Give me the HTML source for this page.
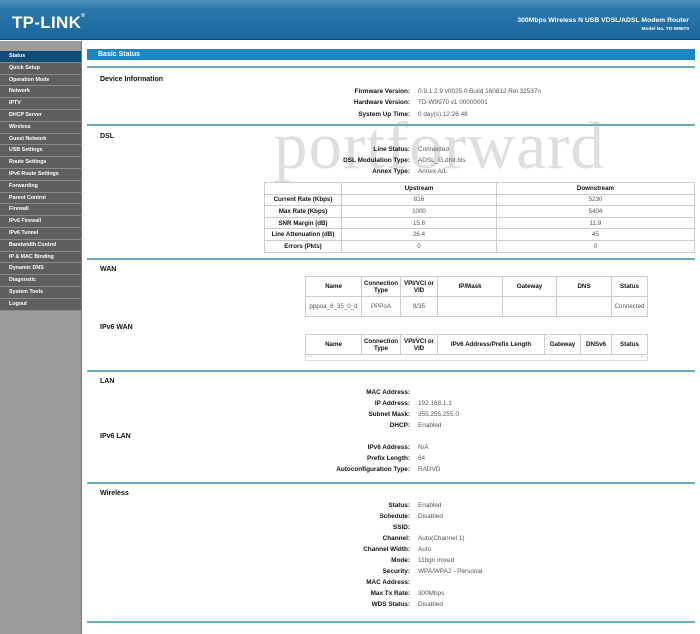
<!DOCTYPE html>
<html><head><meta charset="utf-8"><style>
*{margin:0;padding:0;box-sizing:border-box}
body{width:700px;height:634px;overflow:hidden;background:#fff;font-family:"Liberation Sans",Arial,sans-serif;position:relative;color:#333}
.hdr{position:absolute;left:0;top:0;width:700px;height:40px;background:linear-gradient(180deg,#4f93bd 0%,#2a78aa 25%,#1a66a0 100%);border-bottom:1px solid #0d4f7c}
.logo{position:absolute;left:12px;top:13px;color:#fff;font-weight:bold;font-size:17px;letter-spacing:0.3px;font-family:"Liberation Sans",sans-serif}
.t1{position:absolute;right:11px;top:17px;color:#fff;font-weight:bold;font-size:6.8px}
.t2{position:absolute;right:11px;top:27px;color:#fff;font-weight:bold;font-size:4.8px}
.side{position:absolute;left:0;top:41px;width:82px;height:593px;background:#9c9c9c;border-right:1px solid #777}
.side div{height:11.8px;line-height:11.3px;background:#5f5f5f;border-bottom:1px solid #8a8a8a;color:#fff;font-size:5.3px;font-weight:bold;padding-left:9px}
.side div.a{background:#0f4c78}
.bar{position:absolute;left:87px;top:49px;width:608px;height:11px;background:#1b86c6;color:#fff;font-weight:bold;font-size:7px;line-height:11px;padding-left:11px}
.ln{position:absolute;left:87px;width:608px;height:2px;background:#6aaeb4}
.h{position:absolute;left:100px;font-weight:bold;font-size:7px;color:#111}
.r{position:absolute;font-size:6.4px;line-height:8px}
.r b{position:absolute;right:290px;width:200px;text-align:right;color:#111}
.r span{position:absolute;left:418px;color:#555;white-space:nowrap}
.wm{position:absolute;left:274px;top:108px;font-family:"Liberation Serif",serif;font-size:67px;color:#dedede;letter-spacing:1px}
table{position:absolute;border-collapse:collapse;font-size:6.2px}
td{border:1px solid #ccc;text-align:center;color:#555;padding:0}
th{border:1px solid #ccc;text-align:center;color:#111;font-weight:bold;padding:0}
</style></head><body>
<div class="hdr"><div class="logo">TP-LINK<span style="font-size:5px;vertical-align:top">®</span></div>
<div class="t1">300Mbps Wireless N USB VDSL/ADSL Modem Router</div>
<div class="t2">Model No. TD-W9970</div></div>
<div class="side"><div style="background:#9c9c9c;height:10px;border:0"></div>
<div class="a">Status</div><div>Quick Setup</div><div>Operation Mode</div><div>Network</div><div>IPTV</div><div>DHCP Server</div><div>Wireless</div><div>Guest Network</div><div>USB Settings</div><div>Route Settings</div><div>IPv6 Route Settings</div><div>Forwarding</div><div>Parent Control</div><div>Firewall</div><div>IPv6 Firewall</div><div>IPv6 Tunnel</div><div>Bandwidth Control</div><div>IP &amp; MAC Binding</div><div>Dynamic DNS</div><div>Diagnostic</div><div>System Tools</div><div>Logout</div></div>
<div class="wm">portforward</div>
<div class="bar">Basic Status</div>
<div class="ln" style="top:66px"></div>
<div class="ln" style="top:124px"></div>
<div class="ln" style="top:258px"></div>
<div class="ln" style="top:370px"></div>
<div class="ln" style="top:482px"></div>
<div class="ln" style="top:621px"></div>
<div class="h" style="top:76px">Device Information</div>
<div class="r" style="top:88px;left:0;width:700px"><b>Firmware Version:</b><span>0.9.1 2.9 v0025.0 Build 160812 Rel.32537n</span></div>
<div class="r" style="top:99px;left:0;width:700px"><b>Hardware Version:</b><span>TD-W9970 v1 00000001</span></div>
<div class="r" style="top:111px;left:0;width:700px"><b>System Up Time:</b><span>0 day(s) 12:26:48</span></div>
<div class="h" style="top:133px">DSL</div>
<div class="r" style="top:146px;left:0;width:700px"><b>Line Status:</b><span>Connected</span></div>
<div class="r" style="top:157px;left:0;width:700px"><b>DSL Modulation Type:</b><span>ADSL_G.dmt.bis</span></div>
<div class="r" style="top:168px;left:0;width:700px"><b>Annex Type:</b><span>Annex A/L</span></div>
<table style="left:264px;top:182px;width:431px">
<tr style="height:11.6px"><th style="width:77px"></th><th style="width:155px">Upstream</th><th>Downstream</th></tr>
<tr style="height:11.6px"><th>Current Rate (Kbps)</th><td>816</td><td>5230</td></tr>
<tr style="height:11.6px"><th>Max Rate (Kbps)</th><td>1000</td><td>5404</td></tr>
<tr style="height:11.6px"><th>SNR Margin (dB)</th><td>15.8</td><td>11.9</td></tr>
<tr style="height:11.6px"><th>Line Attenuation (dB)</th><td>26.4</td><td>45</td></tr>
<tr style="height:11.6px"><th>Errors (Pkts)</th><td>0</td><td>0</td></tr>
</table>
<div class="h" style="top:266px">WAN</div>
<table style="left:305px;top:276px;width:343px">
<tr style="height:20px"><th style="width:56px">Name</th><th style="width:39px">Connection Type</th><th style="width:37px">VPI/VCI or VID</th><th style="width:65px">IP/Mask</th><th style="width:54px">Gateway</th><th style="width:55px">DNS</th><th>Status</th></tr>
<tr style="height:20px"><td>pppoa_8_35_0_d</td><td>PPPoA</td><td>8/35</td><td></td><td></td><td></td><td>Connected</td></tr>
</table>
<div class="h" style="top:324px">IPv6 WAN</div>
<table style="left:305px;top:334px;width:343px">
<tr style="height:20px"><th style="width:56px">Name</th><th style="width:39px">Connection Type</th><th style="width:37px">VPI/VCI or VID</th><th style="width:107px">IPv6 Address/Prefix Length</th><th style="width:36px">Gateway</th><th style="width:31px">DNSv6</th><th>Status</th></tr>
</table>
<div style="position:absolute;left:305px;top:354px;width:343px;height:7px;border:1px solid #ddd;border-top:0;font-size:6px;color:#aaa;line-height:6px"><span style="position:absolute;left:4px">‹</span><span style="position:absolute;right:4px">›</span></div>
<div class="h" style="top:378px">LAN</div>
<div class="r" style="top:389px;left:0;width:700px"><b>MAC Address:</b><span></span></div>
<div class="r" style="top:400px;left:0;width:700px"><b>IP Address:</b><span>192.168.1.1</span></div>
<div class="r" style="top:411px;left:0;width:700px"><b>Subnet Mask:</b><span>255.255.255.0</span></div>
<div class="r" style="top:422px;left:0;width:700px"><b>DHCP:</b><span>Enabled</span></div>
<div class="h" style="top:433px">IPv6 LAN</div>
<div class="r" style="top:444px;left:0;width:700px"><b>IPv6 Address:</b><span>N/A</span></div>
<div class="r" style="top:455px;left:0;width:700px"><b>Prefix Length:</b><span>64</span></div>
<div class="r" style="top:466px;left:0;width:700px"><b>Autoconfiguration Type:</b><span>RADVD</span></div>
<div class="h" style="top:490px">Wireless</div>
<div class="r" style="top:502px;left:0;width:700px"><b>Status:</b><span>Enabled</span></div>
<div class="r" style="top:513px;left:0;width:700px"><b>Schedule:</b><span>Disabled</span></div>
<div class="r" style="top:524px;left:0;width:700px"><b>SSID:</b><span></span></div>
<div class="r" style="top:535px;left:0;width:700px"><b>Channel:</b><span>Auto(Channel 1)</span></div>
<div class="r" style="top:546px;left:0;width:700px"><b>Channel Width:</b><span>Auto</span></div>
<div class="r" style="top:557px;left:0;width:700px"><b>Mode:</b><span>11bgn mixed</span></div>
<div class="r" style="top:568px;left:0;width:700px"><b>Security:</b><span>WPA/WPA2 - Personal</span></div>
<div class="r" style="top:579px;left:0;width:700px"><b>MAC Address:</b><span></span></div>
<div class="r" style="top:590px;left:0;width:700px"><b>Max Tx Rate:</b><span>300Mbps</span></div>
<div class="r" style="top:601px;left:0;width:700px"><b>WDS Status:</b><span>Disabled</span></div>
</body></html>
